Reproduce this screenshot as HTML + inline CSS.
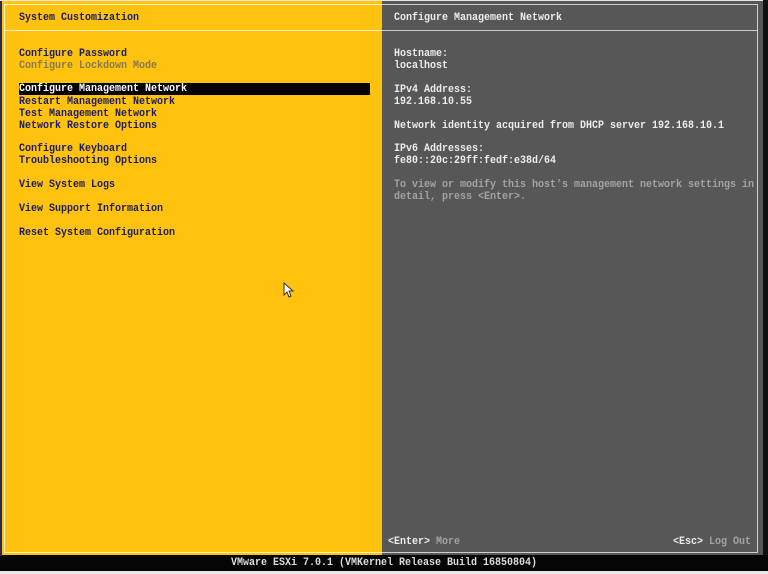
<!DOCTYPE html>
<html><head><style>
body{margin:0;width:768px;height:574px;overflow:hidden;background:#e6e6e6;position:relative;font-family:"Liberation Mono",monospace;font-size:10px;font-weight:bold;}
div{position:absolute;white-space:pre;}
.y{left:0;top:1px;width:382px;height:555px;background:#ffc20e;}
.g{left:382px;top:1px;width:381px;height:555px;background:#575757;}
.blk{left:0;top:555px;width:768px;height:16px;background:#050505;}
.rb{left:763px;top:0;width:5px;height:571px;background:#111;}
.t{line-height:12px;height:12px;transform:scaleY(1.1);}
.l{color:#1c1d5c;left:19px;}
.r{color:#ececec;left:394px;}
</style></head><body>
<div class="y"></div>
<div class="g"></div>
<div class="rb"></div>
<div class="blk"></div>
<div style="left:0;top:1px;width:2px;height:555px;background:#2a2a50"></div>
<div style="left:4px;top:4px;width:1px;height:549px;background:#fff3c0"></div>
<div style="left:4px;top:4px;width:378px;height:1px;background:#fff3c0"></div>
<div style="left:4px;top:552px;width:378px;height:1px;background:#fff3c0"></div>
<div style="left:4px;top:30px;width:378px;height:1px;background:#fff3c0"></div>
<div style="left:382px;top:4px;width:375px;height:1px;background:#cfcfcf"></div>
<div style="left:757px;top:4px;width:1px;height:549px;background:#cfcfcf"></div>
<div style="left:382px;top:552px;width:376px;height:1px;background:#cfcfcf"></div>
<div style="left:382px;top:30px;width:375px;height:1px;background:#cfcfcf"></div>
<div style="left:19px;top:83px;width:351px;height:12px;background:#000"></div>

<div class="t l" style="top:13px">System Customization</div>
<div class="t l" style="top:49px">Configure Password</div>
<div class="t l" style="top:61px;color:#857a4c">Configure Lockdown Mode</div>
<div class="t l" style="top:84px;color:#fff">Configure Management Network</div>
<div class="t l" style="top:97px">Restart Management Network</div>
<div class="t l" style="top:109px">Test Management Network</div>
<div class="t l" style="top:121px">Network Restore Options</div>
<div class="t l" style="top:144px">Configure Keyboard</div>
<div class="t l" style="top:156px">Troubleshooting Options</div>
<div class="t l" style="top:180px">View System Logs</div>
<div class="t l" style="top:204px">View Support Information</div>
<div class="t l" style="top:228px">Reset System Configuration</div>

<div class="t r" style="top:13px">Configure Management Network</div>
<div class="t r" style="top:49px">Hostname:</div>
<div class="t r" style="top:61px">localhost</div>
<div class="t r" style="top:85px">IPv4 Address:</div>
<div class="t r" style="top:97px">192.168.10.55</div>
<div class="t r" style="top:121px">Network identity acquired from DHCP server 192.168.10.1</div>
<div class="t r" style="top:144px">IPv6 Addresses:</div>
<div class="t r" style="top:156px">fe80::20c:29ff:fedf:e38d/64</div>
<div class="t r" style="top:180px;color:#a3a3a3">To view or modify this host's management network settings in</div>
<div class="t r" style="top:192px;color:#a3a3a3">detail, press &lt;Enter&gt;.</div>

<div class="t" style="left:388px;top:537px;color:#ececec">&lt;Enter&gt; <span style="color:#a3a3a3">More</span></div>
<div class="t" style="left:673px;top:537px;color:#ececec">&lt;Esc&gt; <span style="color:#a3a3a3">Log Out</span></div>
<div class="t" style="left:0;width:768px;text-align:center;top:558px;color:#dcdcdc">VMware ESXi 7.0.1 (VMKernel Release Build 16850804)</div>

<svg style="position:absolute;left:283px;top:282px" width="12" height="16" viewBox="0 0 12 16"><path d="M1 1 L1 13 L4 10 L6 15 L8 14 L6 9 L10 9 Z" fill="#fff" stroke="#333" stroke-width="1"/></svg>
</body></html>
